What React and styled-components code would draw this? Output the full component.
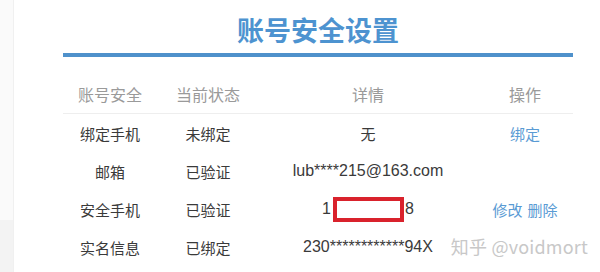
import React from "react";
import styled, { createGlobalStyle } from "styled-components";

const Global = createGlobalStyle`
  html, body { margin: 0; padding: 0; background: #fff; }
  body { font-family: "Noto Sans", "Noto Sans CJK SC", sans-serif; }
`;

const Page = styled.div`
  position: relative;
  display: flex;
  width: 600px;
  height: 272px;
  overflow: hidden;
  background: #fff;
`;

const Side = styled.div`
  width: 14px;
  display: flex;
  flex-direction: column;
  border-right: 1px solid #f0f0f0;
  box-sizing: border-box;
`;

const SideBlock = styled.div`
  background: ${(p) => p.$tone};
  flex: ${(p) => (p.$grow ? 1 : "none")};
  height: ${(p) => p.$h || "auto"};
`;

const Main = styled.div`
  flex: 1;
  padding: 0 27px 0 49px;
  display: flex;
  flex-direction: column;
`;

const Title = styled.h1`
  margin: 0;
  height: 53px;
  display: flex;
  align-items: center;
  justify-content: center;
  font-family: "Noto Sans CJK SC", sans-serif;
  font-size: 27px;
  font-weight: 700;
  color: #4d93d0;
  padding-top: 6px;
  box-sizing: border-box;
`;

const Rule = styled.div`
  height: 4px;
  background: #4f91cb;
`;

const Table = styled.div`
  margin-top: 18px;
  display: grid;
  grid-template-columns: 94px 102px 218px 96px;
`;

const Row = styled.div`
  display: contents;
`;

const Cell = styled.div`
  height: 38px;
  display: flex;
  align-items: center;
  justify-content: center;
  font-family: "Noto Sans CJK SC", sans-serif;
  font-size: ${(p) => (p.$head ? "16px" : "15px")};
  color: ${(p) => (p.$head ? "#9a9a9a" : "#3a3a3a")};
  border-bottom: ${(p) => (p.$head ? "1px solid #eeeeee" : "none")};
  white-space: nowrap;
`;

const Latin = styled.span`
  font-family: "Liberation Sans", Arial, sans-serif;
  font-size: 16px;
  color: #3a3a3a;
  display: inline-flex;
  align-items: center;
`;

const Mask = styled.span`
  display: inline-block;
  width: 71px;
  height: 25px;
  border: 4px solid #d9222c;
  box-sizing: border-box;
  background: #fff;
  margin: 0 1px 0 2px;
`;

const Links = styled.span`
  display: inline-flex;
  gap: 5px;
`;

const Link = styled.a`
  color: #5a9bd4;
  font-size: 15px;
  text-decoration: none;
  cursor: pointer;
`;

const Watermark = styled.div`
  position: absolute;
  right: 12px;
  bottom: 13px;
  font-family: "Noto Sans CJK SC", "Noto Sans", sans-serif;
  font-size: 18px;
  color: #c8c8c8;
  text-shadow: 0 0 1px #ffffff;
  letter-spacing: 0.2px;
  white-space: nowrap;
`;

const head = ["账号安全", "当前状态", "详情", "操作"];

export default function App() {
  return (
    <>
      <Global />
      <Page>
        <Side>
          <SideBlock $tone="#fafafa" $grow />
          <SideBlock $tone="#f3f3f3" $h="52px" />
        </Side>
        <Main>
          <Title>账号安全设置</Title>
          <Rule />
          <Table>
            <Row>
              {head.map((h) => (
                <Cell key={h} $head>
                  {h}
                </Cell>
              ))}
            </Row>
            <Row>
              <Cell>绑定手机</Cell>
              <Cell>未绑定</Cell>
              <Cell>无</Cell>
              <Cell>
                <Link>绑定</Link>
              </Cell>
            </Row>
            <Row>
              <Cell>邮箱</Cell>
              <Cell>已验证</Cell>
              <Cell>
                <Latin>lub****215@163.com</Latin>
              </Cell>
              <Cell />
            </Row>
            <Row>
              <Cell>安全手机</Cell>
              <Cell>已验证</Cell>
              <Cell>
                <Latin>
                  1<Mask />8
                </Latin>
              </Cell>
              <Cell>
                <Links>
                  <Link>修改</Link>
                  <Link>删除</Link>
                </Links>
              </Cell>
            </Row>
            <Row>
              <Cell>实名信息</Cell>
              <Cell>已绑定</Cell>
              <Cell>
                <Latin>230************94X</Latin>
              </Cell>
              <Cell />
            </Row>
          </Table>
        </Main>
        <Watermark>知乎 @voidmort</Watermark>
      </Page>
    </>
  );
}
